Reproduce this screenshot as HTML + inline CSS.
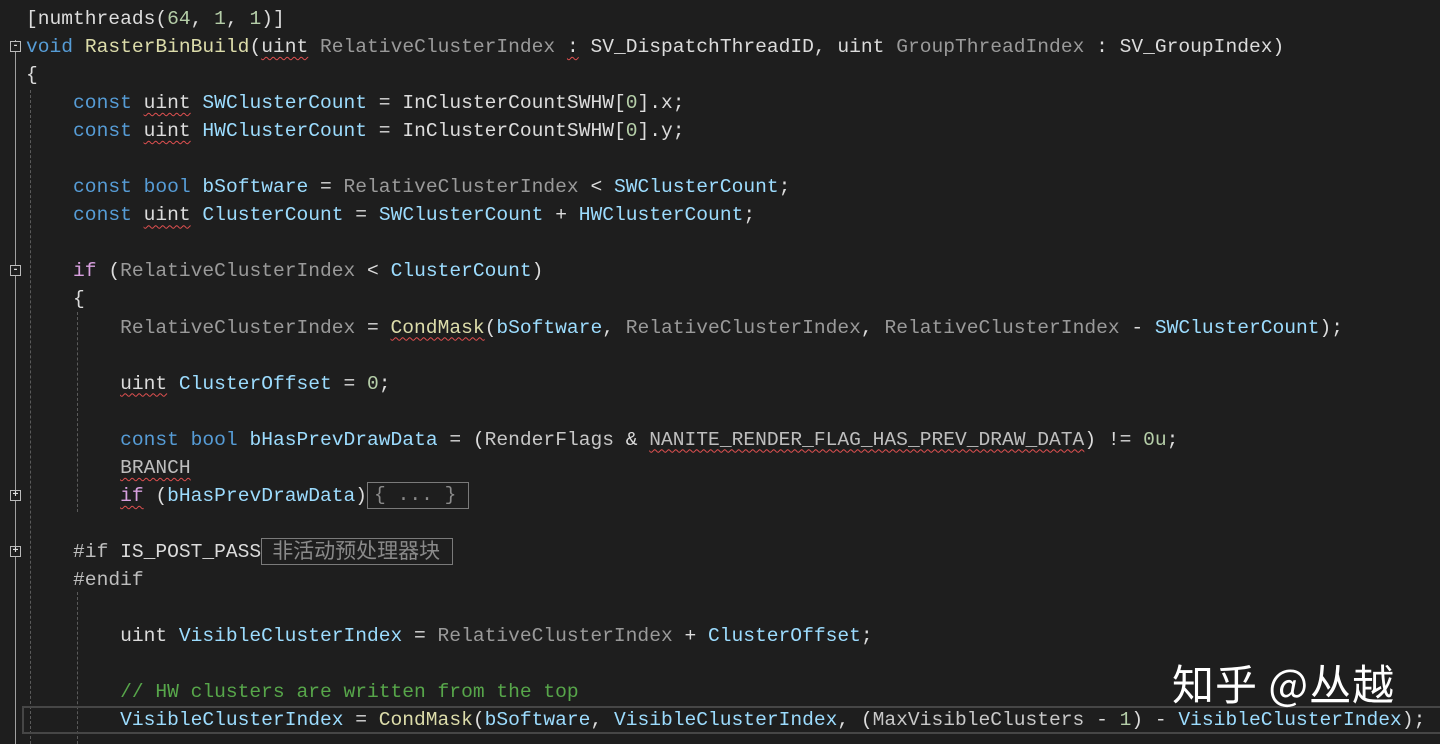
<!DOCTYPE html>
<html><head><meta charset="utf-8"><style>
html,body{margin:0;padding:0;background:#1e1e1e;width:1440px;height:744px;overflow:hidden}
#code{position:absolute;left:26px;top:5px;font-family:"Liberation Mono",monospace;font-size:19.6px;line-height:28.05px;color:#dcdcdc;white-space:pre;margin:0}
.k{color:#569cd6}.f{color:#dcdcaa}.p{color:#9a9a9a}.v{color:#9cdcfe}.n{color:#b5cea8}.c{color:#57a64a}.i{color:#d8a0df}.m{color:#bebebe}.g{color:#c8c8c8}
.s{text-decoration:underline wavy #e05050;text-decoration-thickness:1px;text-underline-offset:4px}
.box{border:1px solid #7a7a7a;color:#8a8a8a;display:inline-block;line-height:25px;vertical-align:top;margin-top:0px}
.br{padding:0 12px 0 6px}
.cj{font-family:"Liberation Sans","Noto Sans CJK SC",sans-serif;font-size:21px;padding:0 12px 0 10px}
.vl{position:absolute;width:0;border-left:1px dashed #5a5a5a}
.fold{position:absolute;left:10px;width:9px;height:9px;border:1px solid #bbb;background:#1e1e1e;color:#ddd;font:bold 10px/9px "Liberation Mono",monospace;text-align:center}
#wm{position:absolute;left:1172px;top:652px;font-family:"Noto Sans CJK SC",sans-serif;font-size:42px;color:#fff;letter-spacing:1px}
#cur{position:absolute;left:22px;top:706px;width:1418px;height:28px;border:2px solid #464646;border-right:none;box-sizing:border-box}
</style></head><body>
<div style="position:absolute;left:15px;top:40px;width:1px;height:704px;background:#a0a0a0"></div>
<div class="vl" style="left:30px;top:90px;height:654px"></div>
<div class="vl" style="left:77px;top:312px;height:200px"></div>
<div class="vl" style="left:77px;top:592px;height:152px"></div>
<div class="fold" style="top:41px">-</div>
<div class="fold" style="top:265px">-</div>
<div class="fold" style="top:490px">+</div>
<div class="fold" style="top:546px">+</div>
<div id="cur"></div>
<pre id="code">[numthreads(<span class="n">64</span>, <span class="n">1</span>, <span class="n">1</span>)]
<span class="k">void</span> <span class="f">RasterBinBuild</span>(<span class="s">uint</span> <span class="p">RelativeClusterIndex</span> <span class="s">:</span> SV_DispatchThreadID, uint <span class="p">GroupThreadIndex</span> : SV_GroupIndex)
{
    <span class="k">const</span> <span class="s">uint</span> <span class="v">SWClusterCount</span> = InClusterCountSWHW[<span class="n">0</span>].x;
    <span class="k">const</span> <span class="s">uint</span> <span class="v">HWClusterCount</span> = InClusterCountSWHW[<span class="n">0</span>].y;

    <span class="k">const</span> <span class="k">bool</span> <span class="v">bSoftware</span> = <span class="p">RelativeClusterIndex</span> &lt; <span class="v">SWClusterCount</span>;
    <span class="k">const</span> <span class="s">uint</span> <span class="v">ClusterCount</span> = <span class="v">SWClusterCount</span> + <span class="v">HWClusterCount</span>;

    <span class="i">if</span> (<span class="p">RelativeClusterIndex</span> &lt; <span class="v">ClusterCount</span>)
    {
        <span class="p">RelativeClusterIndex</span> = <span class="f s">CondMask</span>(<span class="v">bSoftware</span>, <span class="p">RelativeClusterIndex</span>, <span class="p">RelativeClusterIndex</span> - <span class="v">SWClusterCount</span>);

        <span class="s">uint</span> <span class="v">ClusterOffset</span> = <span class="n">0</span>;

        <span class="k">const</span> <span class="k">bool</span> <span class="v">bHasPrevDrawData</span> = (<span class="g">RenderFlags</span> &amp; <span class="m s">NANITE_RENDER_FLAG_HAS_PREV_DRAW_DATA</span>) != <span class="n">0u</span>;
        <span class="m s">BRANCH</span>
        <span class="i s">if</span> (<span class="v">bHasPrevDrawData</span>)<span class="box br">{ ... }</span>

    <span class="m">#if</span> IS_POST_PASS<span class="box cj">非活动预处理器块</span>
    <span class="m">#endif</span>

        uint <span class="v">VisibleClusterIndex</span> = <span class="p">RelativeClusterIndex</span> + <span class="v">ClusterOffset</span>;

        <span class="c">// HW clusters are written from the top</span>
        <span class="v">VisibleClusterIndex</span> = <span class="f">CondMask</span>(<span class="v">bSoftware</span>, <span class="v">VisibleClusterIndex</span>, (<span class="g">MaxVisibleClusters</span> - <span class="n">1</span>) - <span class="v">VisibleClusterIndex</span>);
</pre>
<div id="wm">知乎 @丛越</div>
</body></html>
